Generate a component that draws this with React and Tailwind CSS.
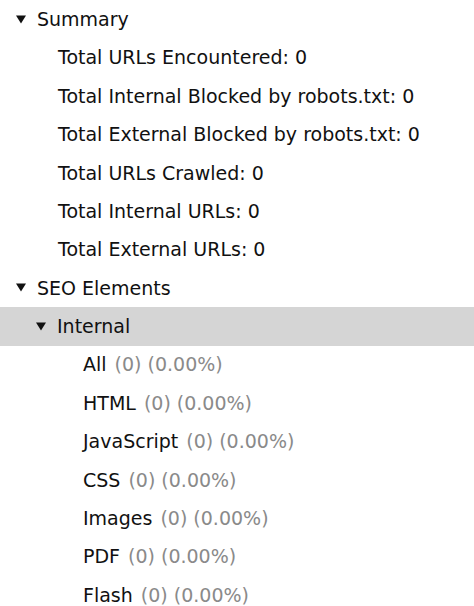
const Tri = () => (
  <svg width="10" height="9" viewBox="0 0 10 9" className="shrink-0">
    <path d="M0 0.5 L10 0.5 L5 8.5 Z" fill="#111" />
  </svg>
);

const Row = ({ indent, caret, label, count, selected }) => (
  <div
    className={`h-[38.4px] flex items-center ${selected ? "bg-[#d5d5d5]" : ""}`}
  >
    <div className={`flex items-center ${indent}`}>
      {caret && (
        <span className="w-[21px] flex items-center">
          <Tri />
        </span>
      )}
      <span className="text-[#111]">{label}</span>
      {count && <span className="text-[#8a8a8a] ml-[8px]">(0) (0.00%)</span>}
    </div>
  </div>
);

const leaves = ["All", "HTML", "JavaScript", "CSS", "Images", "PDF", "Flash"];

export default function App() {
  return (
    <div
      className="w-[474px] h-[606px] overflow-hidden bg-white text-[19px]"
      style={{ fontFamily: '"DejaVu Sans", sans-serif' }}
    >
      <Row indent="pl-[16px]" caret label="Summary" />
      <Row indent="pl-[58px]" label="Total URLs Encountered: 0" />
      <Row indent="pl-[58px]" label="Total Internal Blocked by robots.txt: 0" />
      <Row indent="pl-[58px]" label="Total External Blocked by robots.txt: 0" />
      <Row indent="pl-[58px]" label="Total URLs Crawled: 0" />
      <Row indent="pl-[58px]" label="Total Internal URLs: 0" />
      <Row indent="pl-[58px]" label="Total External URLs: 0" />
      <Row indent="pl-[16px]" caret label="SEO Elements" />
      <Row indent="pl-[36px]" caret label="Internal" selected />
      {leaves.map((l) => (
        <Row key={l} indent="pl-[83px]" label={l} count />
      ))}
    </div>
  );
}
